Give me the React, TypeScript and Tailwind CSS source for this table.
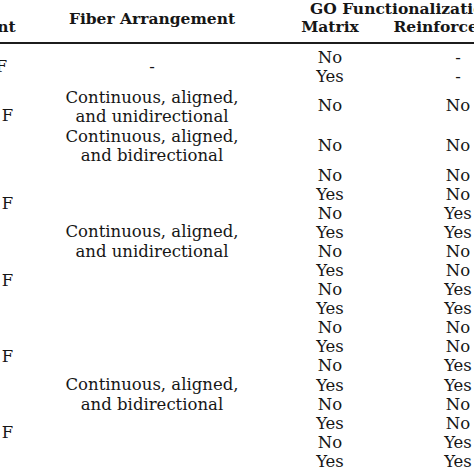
const body: [string, string, string][] = [
  ["No", "-", "row-start-1"],
  ["Yes", "-", "row-start-2"],
  ["No", "No", "row-start-3"],
  ["No", "No", "row-start-4"],
  ["No", "No", "row-start-5"],
  ["Yes", "No", "row-start-6"],
  ["No", "Yes", "row-start-7"],
  ["Yes", "Yes", "row-start-8"],
  ["No", "No", "row-start-9"],
  ["Yes", "No", "row-start-10"],
  ["No", "Yes", "row-start-11"],
  ["Yes", "Yes", "row-start-12"],
  ["No", "No", "row-start-13"],
  ["Yes", "No", "row-start-14"],
  ["No", "Yes", "row-start-15"],
  ["Yes", "Yes", "row-start-16"],
  ["No", "No", "row-start-17"],
  ["Yes", "No", "row-start-18"],
  ["No", "Yes", "row-start-19"],
  ["Yes", "Yes", "row-start-20"],
];

const cols = "grid grid-cols-[15px_274px_82px_174px]";

const App = () => {
  return (
    <div className="w-[474px] h-[474px] overflow-hidden bg-white text-[#161616] font-['DejaVu_Serif',serif]">
      {/* Header */}
      <div className={`${cols} grid-rows-[18px_18px] h-[42px] font-bold text-[15.5px] leading-[18px]`}>
        <div className="col-start-1 row-start-2 flex justify-center pr-[2px]">nt</div>
        <div className="col-start-2 row-start-1 row-span-2 flex items-center justify-center pt-[2px]">
          Fiber Arrangement
        </div>
        <div className="col-start-3 col-span-2 row-start-1 flex justify-start pl-[21px] whitespace-nowrap">
          GO Functionalization
        </div>
        <div className="col-start-3 row-start-2 flex justify-center">Matrix</div>
        <div className="col-start-4 row-start-2 flex justify-center">Reinforcement</div>
      </div>
      <div className="h-[1.5px] bg-[#1c1c1c]" />

      {/* Body */}
      <div className={`${cols} grid-rows-[19px_19px_40px_40px_repeat(16,19.1px)] pt-[4px] text-[16.5px] leading-[19px]`}>
        <div className="col-start-1 row-start-1 row-span-2 flex items-center justify-center pr-[12px]">F</div>
        <div className="col-start-1 row-start-3 flex items-end justify-center pb-[1px]">F</div>
        <div className="col-start-1 row-start-5 row-span-4 flex items-center justify-center">F</div>
        <div className="col-start-1 row-start-9 row-span-4 flex items-center justify-center">F</div>
        <div className="col-start-1 row-start-13 row-span-4 flex items-center justify-center">F</div>
        <div className="col-start-1 row-start-17 row-span-4 flex items-center justify-center">F</div>

        <div className="col-start-2 row-start-1 row-span-2 flex items-center justify-center">-</div>
        <div className="col-start-2 row-start-3 flex flex-col items-center justify-center pt-[2px]">
          <span>Continuous, aligned,</span>
          <span>and unidirectional</span>
        </div>
        <div className="col-start-2 row-start-4 flex flex-col items-center justify-center">
          <span>Continuous, aligned,</span>
          <span>and bidirectional</span>
        </div>
        <div className="col-start-2 row-start-5 row-span-8 flex flex-col items-center justify-center leading-[20px]">
          <span>Continuous, aligned,</span>
          <span>and unidirectional</span>
        </div>
        <div className="col-start-2 row-start-13 row-span-8 flex flex-col items-center justify-center leading-[20px]">
          <span>Continuous, aligned,</span>
          <span>and bidirectional</span>
        </div>

        {body.map(([m, r, row], i) => (
          <div key={i} className="contents">
            <div className={`col-start-3 ${row} flex items-center justify-center`}>{m}</div>
            <div className={`col-start-4 ${row} flex items-center justify-center`}>{r}</div>
          </div>
        ))}
      </div>
    </div>
  );
};

export default App;
